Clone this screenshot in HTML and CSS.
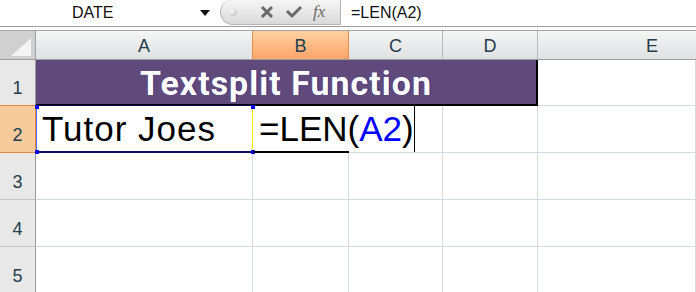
FILE: index.html
```html
<!DOCTYPE html>
<html lang="en">
<head>
    <meta charset="UTF-8">
    <title>Textsplit Function</title>
    <link rel="stylesheet" href="styles.css">
</head>
<body>
    <div class="formula-bar">
        <div class="name-box">
            <span class="name">DATE</span>
            <span class="drop"></span>
        </div>
        <div class="fx-pill">
            <span class="dot"></span>
            <svg class="ico" width="16" height="14" viewBox="0 0 16 14"><path d="M3 2 L13 12 M13 2 L3 12" stroke="#6a6a6a" stroke-width="3"/></svg>
            <svg class="ico" width="18" height="14" viewBox="0 0 18 14"><path d="M2 6 L7 11 L16 2" stroke="#6a6a6a" stroke-width="3" fill="none"/></svg>
            <span class="fx">fx</span>
        </div>
        <div class="formula">=LEN(A2)</div>
    </div>

    <div class="sheet">
        <!-- header row -->
        <div class="corner"><svg width="22" height="20" viewBox="0 0 22 20"><path d="M1 19 L21 19 L21 1 Z" fill="#f4f4f4"/></svg></div>
        <div class="col-head">A</div>
        <div class="col-head active">B</div>
        <div class="col-head">C</div>
        <div class="col-head">D</div>
        <div class="col-head wide">E</div>

        <!-- row 1 -->
        <div class="row-head">1</div>
        <div class="title">Textsplit Function</div>
        <div class="cell"></div>

        <!-- row 2 -->
        <div class="row-head active">2</div>
        <div class="cell ref">Tutor Joes<i class="h tl"></i><i class="h tr"></i><i class="h bl"></i><i class="h br"></i></div>
        <div class="cell editing"><span class="edit">=LEN(<span class="blue">A2</span>)</span></div>
        <div class="cell"></div>
        <div class="cell"></div>

        <!-- rows 3-5 -->
        <div class="row-head">3</div>
        <div class="cell"></div><div class="cell"></div><div class="cell"></div><div class="cell"></div><div class="cell"></div>
        <div class="row-head">4</div>
        <div class="cell"></div><div class="cell"></div><div class="cell"></div><div class="cell"></div><div class="cell"></div>
        <div class="row-head">5</div>
        <div class="cell"></div><div class="cell"></div><div class="cell"></div><div class="cell"></div><div class="cell"></div>
    </div>
</body>
</html>
```

FILE: styles.css
```css
:root {
    --grid: #d4d9e2;
    --head: #223d4c;
    --purple: #604a7b;
}
* {box-sizing: border-box; margin: 0; padding: 0;}
body {
    background: #fff;
    font-family: 'Liberation Sans', Arial, sans-serif;
    overflow: hidden;
}

/* formula bar */
.formula-bar {
    display: flex;
    height: 27px;
    border-bottom: 1px solid #9c9c9c;
}
.name-box {
    width: 220px;
    display: flex;
    align-items: center;
    padding-left: 72px;
}
.name {font-size: 16px; color: #111; width: 128px;}
.drop {
    width: 0; height: 0;
    border-left: 5px solid transparent;
    border-right: 5px solid transparent;
    border-top: 6px solid #111;
}
.fx-pill {
    width: 121px;
    height: 25px;
    display: flex;
    align-items: center;
    gap: 10px;
    padding-left: 8px;
    background: linear-gradient(#f6f6f6, #d9d9d9);
    border: 1px solid #b4b4b4;
    border-top: none;
    border-radius: 12px 0 0 13px;
}
.dot {
    width: 8px; height: 8px;
    border-radius: 50%;
    background: radial-gradient(circle at 35% 35%, #fff, #b5b5b5);
    margin-right: 12px;
}
.fx {
    font-family: 'Liberation Serif', serif;
    font-style: italic;
    font-size: 17px;
    color: #6a6a6a;
}
.formula {
    font-size: 16px;
    color: #111;
    padding: 4px 0 0 10px;
}

/* sheet */
.sheet {
    margin-top: 3px;
    border-top: 1px solid #a5a5a5;
    display: grid;
    grid-template-columns: 36px 217px 96px 94px 95px 1fr;
    grid-template-rows: 29px 46px 47px 47px 47px 47px;
}
.corner {
    background: #d0d0d0;
    border-right: 1px solid #a0a0a0;
    border-bottom: 1px solid #9c9c9c;
    display: flex;
    align-items: flex-end;
    justify-content: flex-end;
    padding: 0 3px 2px 0;
}
.col-head {
    background: linear-gradient(#f4f5f5, #dfe1e2);
    border-right: 1px solid #b8b8b8;
    border-bottom: 1px solid #9c9c9c;
    color: var(--head);
    font-size: 18px;
    display: flex;
    align-items: center;
    justify-content: center;
    padding-top: 2px;
}
.col-head.wide {padding-left: 70px; border-right: none;}
.col-head.active {
    background: linear-gradient(#ffd1a0, #fda56a);
    border-right: 1px solid #e68b48;
    border-left: 1px solid #e68b48;
    margin-left: -1px;
}
.row-head {
    background: #e8e8e8;
    border-right: 1px solid #9a9a9a;
    border-bottom: 1px solid #c5c5c5;
    color: var(--head);
    font-size: 18px;
    display: flex;
    align-items: flex-end;
    justify-content: center;
    padding-bottom: 6px;
}
.row-head.active {
    background: #f8cb9d;
    border-right: 1px solid #e58a43;
    border-bottom: 1px solid #e58a43;
    border-top: 1px solid #e58a43;
    margin-top: -1px;
}
.cell {
    border-right: 1px solid var(--grid);
    border-bottom: 1px solid var(--grid);
}
.title {
    grid-column: 2 / 6;
    background: var(--purple);
    border-right: 2px solid #000;
    border-bottom: 2px solid #000;
    color: #fff;
    font-family: Roboto, 'Liberation Sans', sans-serif;
    font-weight: 700;
    font-size: 34px;
    letter-spacing: 1px;
    display: flex;
    align-items: center;
    justify-content: center;
    padding-top: 1px;
    text-shadow: 1px 0 0 #3c2f8a;
}

/* A2: referenced cell */
.ref {
    position: relative;
    font-size: 35px;
    letter-spacing: 1px;
    color: #000;
    display: flex;
    align-items: center;
    padding-left: 5px;
    border-left: 1px solid #4a6cff;
    border-bottom: 2px solid #0a0a66;
    border-top: 1px solid #0a0a66;
    border-right: 1px solid #f4e800;
    margin-top: -1px;
}
.h {
    position: absolute;
    width: 4px; height: 4px;
    background: #0000f0;
}
.tl {top: -1px; left: -2px;}
.tr {top: -1px; right: -3px;}
.bl {bottom: -3px; left: -2px;}
.br {bottom: -3px; right: -3px;}

/* B2: cell in edit mode, text spills into C2 */
.editing {
    grid-column: 3 / 5;
    position: relative;
    display: flex;
    align-items: center;
    padding-left: 6px;
}
.editing::after {
    content: "";
    position: absolute;
    left: 0; bottom: -1px;
    width: 96px; height: 2px;
    background: #000;
}
.edit {
    font-size: 35px;
    color: #000;
    align-self: stretch;
    display: flex;
    align-items: center;
    border-right: 1px solid #000;
}
.blue {color: #0000ff;}
```
